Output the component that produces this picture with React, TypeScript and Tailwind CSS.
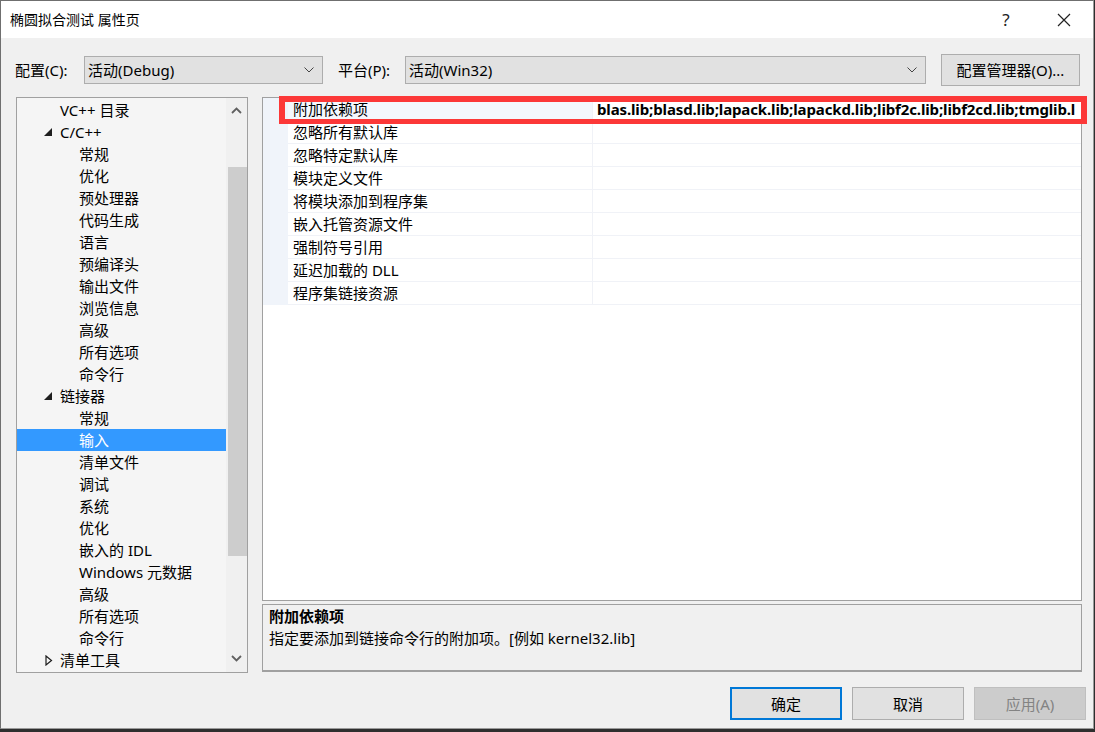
import React from 'react';

type TreeItem = { label: string; level: 1 | 2; expand?: 'open' | 'closed' };

const treeItems: TreeItem[] = [
  { label: 'VC++ 目录', level: 1 },
  { label: 'C/C++', level: 1, expand: 'open' },
  { label: '常规', level: 2 },
  { label: '优化', level: 2 },
  { label: '预处理器', level: 2 },
  { label: '代码生成', level: 2 },
  { label: '语言', level: 2 },
  { label: '预编译头', level: 2 },
  { label: '输出文件', level: 2 },
  { label: '浏览信息', level: 2 },
  { label: '高级', level: 2 },
  { label: '所有选项', level: 2 },
  { label: '命令行', level: 2 },
  { label: '链接器', level: 1, expand: 'open' },
  { label: '常规', level: 2 },
  { label: '输入', level: 2 },
  { label: '清单文件', level: 2 },
  { label: '调试', level: 2 },
  { label: '系统', level: 2 },
  { label: '优化', level: 2 },
  { label: '嵌入的 IDL', level: 2 },
  { label: 'Windows 元数据', level: 2 },
  { label: '高级', level: 2 },
  { label: '所有选项', level: 2 },
  { label: '命令行', level: 2 },
  { label: '清单工具', level: 1, expand: 'closed' },
];

const properties = [
  '附加依赖项',
  '忽略所有默认库',
  '忽略特定默认库',
  '模块定义文件',
  '将模块添加到程序集',
  '嵌入托管资源文件',
  '强制符号引用',
  '延迟加载的 DLL',
  '程序集链接资源',
];

const SELECTED = 15;

const Chevron = ({ up }: { up?: boolean }) => (
  <svg width="11" height="7" viewBox="0 0 11 7">
    <path
      d={up ? 'M1 6 L5.5 1.5 L10 6' : 'M1 1 L5.5 5.5 L10 1'}
      fill="none"
      stroke="#606060"
      strokeWidth="1.8"
    />
  </svg>
);

const ComboArrow = () => (
  <svg width="10" height="6" viewBox="0 0 10 6">
    <path d="M0.5 0.5 L5 5 L9.5 0.5" fill="none" stroke="#444" strokeWidth="1" />
  </svg>
);

const Combo = ({ value, width }: { value: string; width: string }) => (
  <div
    className={`${width} h-[28px] bg-[#e1e1e1] border border-[#adadad] flex items-center justify-between pl-[3px] pr-[8px]`}
  >
    <span>{value}</span>
    <ComboArrow />
  </div>
);

const TreePanel = () => (
  <div className="w-[232px] h-[576px] border border-[#a0a0a0] bg-[#f5f5f5] flex">
    <div className="flex-1 pt-[1px] overflow-hidden">
      {treeItems.map((item, i) => (
        <div
          key={i}
          className={`h-[22px] flex items-center whitespace-nowrap ${
            i === SELECTED ? 'bg-[#3399ff] text-white' : 'text-black'
          } ${item.level === 1 ? 'pl-[27px]' : 'pl-[62px]'}`}
        >
          {item.level === 1 && (
            <span className="w-[16px] flex items-center">
              {item.expand === 'open' && (
                <svg width="8" height="8" viewBox="0 0 8 8">
                  <polygon points="8,0 8,8 0,8" fill="#1e1e1e" />
                </svg>
              )}
              {item.expand === 'closed' && (
                <svg width="8" height="11" viewBox="0 0 8 11" className="ml-[1px]">
                  <polygon points="1,1 6.5,5.5 1,10" fill="none" stroke="#1e1e1e" strokeWidth="1.2" />
                </svg>
              )}
            </span>
          )}
          <span>{item.label}</span>
        </div>
      ))}
    </div>
    <div className="w-[21px] bg-[#f0f0f0] flex flex-col items-center">
      <div className="h-[22px] w-full flex items-center justify-center pt-[2px]">
        <Chevron up />
      </div>
      <div className="h-[47px]" />
      <div className="w-[19px] ml-[1px] h-[389px] bg-[#cdcdcd]" />
      <div className="flex-1" />
      <div className="h-[22px] w-full flex items-center justify-center pb-[6px]">
        <Chevron />
      </div>
    </div>
  </div>
);

const PropertyGrid = () => (
  <div className="relative w-[820px] h-[504px] border border-[#a0a0a0] bg-white">
    {properties.map((name, i) => (
      <div key={i} className="h-[23px] flex">
        <div className="w-[25px] bg-[#f0f4fa]" />
        <div
          className={`w-[305px] pl-[5px] flex items-center border-b border-r border-[#f0f2f7] ${
            i === 0 ? 'bg-[#f4f7fc]' : ''
          }`}
        >
          {name}
        </div>
        <div className="flex-1 pl-[4px] flex items-center border-b border-[#f0f2f7] overflow-hidden whitespace-nowrap">
          {i === 0 && (
            <span className="font-bold tracking-[-0.13px]">
              blas.lib;blasd.lib;lapack.lib;lapackd.lib;libf2c.lib;libf2cd.lib;tmglib.l
            </span>
          )}
        </div>
      </div>
    ))}
    <div className="absolute left-[16px] top-[-2px] w-[808px] h-[28px] border-[6px] border-b-[5px] border-[#fc3838]" />
  </div>
);

const Button = ({
  label,
  variant,
}: {
  label: string;
  variant: 'default' | 'normal' | 'disabled';
}) => {
  const styles = {
    default: 'border-2 border-[#0078d7] bg-[#e1e1e1] text-black',
    normal: 'border border-[#adadad] bg-[#e1e1e1] text-black',
    disabled: 'border border-[#bfbfbf] bg-[#cccccc] text-[#838383]',
  }[variant];
  return (
    <div className={`w-[112px] h-[33px] flex items-center justify-center ${styles}`}>
      {label}
    </div>
  );
};

export default function App() {
  return (
    <div className="w-[1095px] h-[732px] bg-[#2e2e2e] overflow-hidden font-[Noto_Sans,Noto_Sans_CJK_SC,sans-serif] text-[15px] leading-[22px]">
      <div className="w-[1094px] h-[729px] bg-[#f0f0f0] border border-[#6f6f6f] border-r-[#9a9a9a] border-b-[#9a9a9a] flex flex-col">
        {/* title bar */}
        <div className="h-[37px] bg-white flex items-center justify-between pl-[9px] text-[14px]">
          <span>椭圆拟合测试 属性页</span>
          <div className="flex items-center">
            <span className="w-[60px] text-center text-[17px] text-[#222]">?</span>
            <span className="w-[56px] flex justify-center mr-[1px]">
              <svg width="14" height="14" viewBox="0 0 14 14">
                <path d="M1 1 L13 13 M13 1 L1 13" stroke="#222" strokeWidth="1.2" />
              </svg>
            </span>
          </div>
        </div>

        {/* configuration row */}
        <div className="mt-[16px] h-[32px] flex items-center pl-[14px]">
          <span className="w-[69px]">配置(C):</span>
          <Combo value="活动(Debug)" width="w-[239px]" />
          <span className="ml-[15px] w-[67px]">平台(P):</span>
          <Combo value="活动(Win32)" width="w-[521px]" />
          <div className="ml-[15px] w-[139px] h-[32px] bg-[#e1e1e1] border border-[#adadad] flex items-center justify-center">
            配置管理器(O)...
          </div>
        </div>

        {/* main */}
        <div className="mt-[11px] flex pl-[15px]">
          <TreePanel />
          <div className="ml-[14px] flex flex-col">
            <PropertyGrid />
            <div className="mt-[3px] w-[820px] h-[68px] border border-[#a0a0a0] border-b-2 bg-[#f0f0f0] pl-[6px]">
              <div className="font-bold">附加依赖项</div>
              <div>指定要添加到链接命令行的附加项。[例如 kernel32.lib]</div>
            </div>
          </div>
        </div>

        {/* buttons */}
        <div className="mt-[14px] flex justify-end gap-[10px] pr-[7px]">
          <Button label="确定" variant="default" />
          <Button label="取消" variant="normal" />
          <Button label="应用(A)" variant="disabled" />
        </div>
      </div>
    </div>
  );
}
